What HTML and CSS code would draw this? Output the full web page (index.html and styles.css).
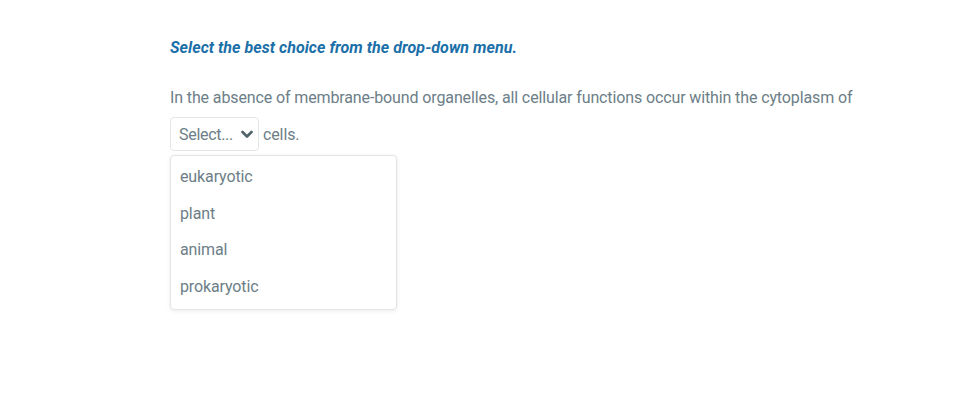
FILE: index.html
```html
<!DOCTYPE html>
<html>
<head>
<meta charset="utf-8">
<link rel="stylesheet" href="styles.css">
</head>
<body>
<div class="page">
  <p class="instr">Select the best choice from the drop-down menu.</p>
  <p class="question">In the absence of membrane-bound organelles, all cellular functions occur within the cytoplasm of</p>
  <div class="answer">
    <div class="select">
      <span class="label">Select...</span>
      <svg class="chev" width="12" height="9" viewBox="0 0 12 9"><path d="M1.5 2 L6 6.5 L10.5 2" fill="none" stroke="#51636b" stroke-width="2.6" stroke-linecap="round" stroke-linejoin="round"/></svg>
    </div>
    <span class="after">cells.</span>
  </div>
  <ul class="menu">
    <li>eukaryotic</li>
    <li>plant</li>
    <li>animal</li>
    <li>prokaryotic</li>
  </ul>
</div>
</body>
</html>
```
FILE: styles.css
```css
html, body { margin: 0; padding: 0; background: #fff; }
body { font-family: Roboto, "Noto Sans", sans-serif; color: #6c7e87; }
.page { padding: 38px 0 40px 170px; }
.instr { margin: 0; font-size: 16px; font-weight: 700; font-style: italic; color: #1b6fa8; line-height: 20px; letter-spacing: 0.05px; }
.question { margin: 29px 0 0; font-size: 16px; line-height: 22px; letter-spacing: -0.12px; }
.answer { margin-top: 8px; display: flex; align-items: center; gap: 4px; }
.select { box-sizing: border-box; width: 89px; height: 34px; border: 1px solid #e3e6e8; border-radius: 4px; display: flex; align-items: center; padding: 0 5px 0 8px; justify-content: space-between; font-size: 16px; letter-spacing: -0.3px; }
.after { font-size: 16px; letter-spacing: -0.12px; }
.menu { margin: 4px 0 0; padding: 3px 0 0; list-style: none; box-sizing: border-box; width: 227px; height: 155px; background: #fff; border: 1px solid #e2e5e7; border-radius: 4px; box-shadow: 0 1px 4px rgba(0,0,0,0.08); }
.menu li { height: 36.7px; line-height: 36.7px; padding-left: 9px; font-size: 16px; letter-spacing: -0.12px; }
```
